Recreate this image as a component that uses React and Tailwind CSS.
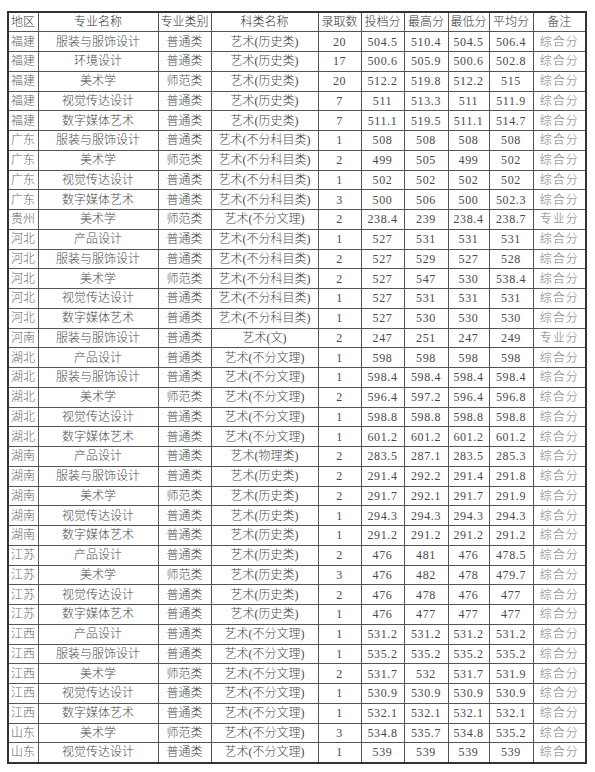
const rows = [
  ["福建", "服装与服饰设计", "普通类", "艺术(历史类)", "20", "504.5", "510.4", "504.5", "506.4", "综合分"],
  ["福建", "环境设计", "普通类", "艺术(历史类)", "17", "500.6", "505.9", "500.6", "502.8", "综合分"],
  ["福建", "美术学", "师范类", "艺术(历史类)", "20", "512.2", "519.8", "512.2", "515", "综合分"],
  ["福建", "视觉传达设计", "普通类", "艺术(历史类)", "7", "511", "513.3", "511", "511.9", "综合分"],
  ["福建", "数字媒体艺术", "普通类", "艺术(历史类)", "7", "511.1", "519.5", "511.1", "514.7", "综合分"],
  ["广东", "服装与服饰设计", "普通类", "艺术(不分科目类)", "1", "508", "508", "508", "508", "综合分"],
  ["广东", "美术学", "师范类", "艺术(不分科目类)", "2", "499", "505", "499", "502", "综合分"],
  ["广东", "视觉传达设计", "普通类", "艺术(不分科目类)", "1", "502", "502", "502", "502", "综合分"],
  ["广东", "数字媒体艺术", "普通类", "艺术(不分科目类)", "3", "500", "506", "500", "502.3", "综合分"],
  ["贵州", "美术学", "师范类", "艺术(不分文理)", "2", "238.4", "239", "238.4", "238.7", "专业分"],
  ["河北", "产品设计", "普通类", "艺术(不分科目类)", "1", "527", "531", "531", "531", "综合分"],
  ["河北", "服装与服饰设计", "普通类", "艺术(不分科目类)", "2", "527", "529", "527", "528", "综合分"],
  ["河北", "美术学", "师范类", "艺术(不分科目类)", "2", "527", "547", "530", "538.4", "综合分"],
  ["河北", "视觉传达设计", "普通类", "艺术(不分科目类)", "1", "527", "531", "531", "531", "综合分"],
  ["河北", "数字媒体艺术", "普通类", "艺术(不分科目类)", "1", "527", "530", "530", "530", "综合分"],
  ["河南", "服装与服饰设计", "普通类", "艺术(文)", "2", "247", "251", "247", "249", "专业分"],
  ["湖北", "产品设计", "普通类", "艺术(不分文理)", "1", "598", "598", "598", "598", "综合分"],
  ["湖北", "服装与服饰设计", "普通类", "艺术(不分文理)", "1", "598.4", "598.4", "598.4", "598.4", "综合分"],
  ["湖北", "美术学", "师范类", "艺术(不分文理)", "2", "596.4", "597.2", "596.4", "596.8", "综合分"],
  ["湖北", "视觉传达设计", "普通类", "艺术(不分文理)", "1", "598.8", "598.8", "598.8", "598.8", "综合分"],
  ["湖北", "数字媒体艺术", "普通类", "艺术(不分文理)", "1", "601.2", "601.2", "601.2", "601.2", "综合分"],
  ["湖南", "产品设计", "普通类", "艺术(物理类)", "2", "283.5", "287.1", "283.5", "285.3", "综合分"],
  ["湖南", "服装与服饰设计", "普通类", "艺术(历史类)", "2", "291.4", "292.2", "291.4", "291.8", "综合分"],
  ["湖南", "美术学", "师范类", "艺术(历史类)", "2", "291.7", "292.1", "291.7", "291.9", "综合分"],
  ["湖南", "视觉传达设计", "普通类", "艺术(历史类)", "1", "294.3", "294.3", "294.3", "294.3", "综合分"],
  ["湖南", "数字媒体艺术", "普通类", "艺术(历史类)", "1", "291.2", "291.2", "291.2", "291.2", "综合分"],
  ["江苏", "产品设计", "普通类", "艺术(历史类)", "2", "476", "481", "476", "478.5", "综合分"],
  ["江苏", "美术学", "师范类", "艺术(历史类)", "3", "476", "482", "478", "479.7", "综合分"],
  ["江苏", "视觉传达设计", "普通类", "艺术(历史类)", "2", "476", "478", "476", "477", "综合分"],
  ["江苏", "数字媒体艺术", "普通类", "艺术(历史类)", "1", "476", "477", "477", "477", "综合分"],
  ["江西", "产品设计", "普通类", "艺术(不分文理)", "1", "531.2", "531.2", "531.2", "531.2", "综合分"],
  ["江西", "服装与服饰设计", "普通类", "艺术(不分文理)", "1", "535.2", "535.2", "535.2", "535.2", "综合分"],
  ["江西", "美术学", "师范类", "艺术(不分文理)", "2", "531.7", "532", "531.7", "531.9", "综合分"],
  ["江西", "视觉传达设计", "普通类", "艺术(不分文理)", "1", "530.9", "530.9", "530.9", "530.9", "综合分"],
  ["江西", "数字媒体艺术", "普通类", "艺术(不分文理)", "1", "532.1", "532.1", "532.1", "532.1", "综合分"],
  ["山东", "美术学", "师范类", "艺术(不分文理)", "3", "534.8", "535.7", "534.8", "535.2", "综合分"],
  ["山东", "视觉传达设计", "普通类", "艺术(不分文理)", "1", "539", "539", "539", "539", "综合分"],
];

const headers = ["地区", "专业名称", "专业类别", "科类名称", "录取数", "投档分", "最高分", "最低分", "平均分", "备注"];
const widths = [30, 120, 53, 107, 43, 43, 44, 41, 44, 53];

const App = () => {
  return (
    <div
      className="w-[595px] h-[772px] bg-white pt-[11px] pl-[7px] text-[#4a4a4a]"
      style={{ fontFamily: '"Liberation Serif", "Noto Sans CJK SC", serif' }}
    >
      <table className="table-fixed border-collapse border-2 border-[#333] text-[12px] leading-none font-light">
        <colgroup>
          {widths.map((w, i) => (
            <col key={i} style={{ width: w }} />
          ))}
        </colgroup>
        <thead>
          <tr className="h-[19.75px]">
            {headers.map((h, i) => (
              <th
                key={h}
                className={`border border-[#555] font-light text-[#333] whitespace-nowrap p-0 ${i === 0 ? "text-left pl-[2px]" : "text-center"}`}
              >
                {h}
              </th>
            ))}
          </tr>
        </thead>
        <tbody>
          {rows.map((r, ri) => (
            <tr key={ri} className="h-[19.75px]">
              {r.map((c, ci) => (
                <td
                  key={ci}
                  className={`border border-[#555] whitespace-nowrap p-0 ${ci === 0 ? "text-left pl-[2px] text-[#666]" : "text-center"} ${ci >= 4 && ci <= 8 ? "tracking-[0.6px]" : ""} ${ci === 9 ? "text-[#777] tracking-[1px]" : ""}`}
                >
                  {c}
                </td>
              ))}
            </tr>
          ))}
        </tbody>
      </table>
    </div>
  );
};

export default App;
